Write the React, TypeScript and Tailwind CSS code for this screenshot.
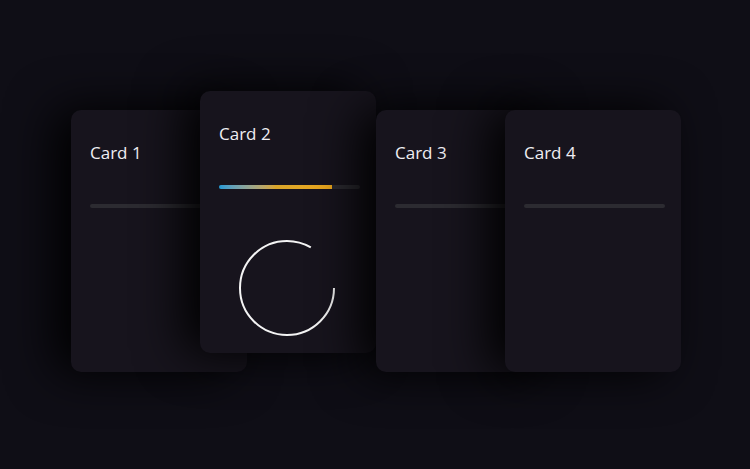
import React from 'react';

interface CardProps {
  title: string;
  className?: string;
  progress?: number;
  showRing?: boolean;
}

const Card: React.FC<CardProps> = ({ title, className = '', progress, showRing }) => {
  const radius = 47;
  const circumference = 2 * Math.PI * radius;
  const arc = (300 / 360) * circumference;

  return (
    <div
      className={`relative w-[176px] h-[262px] shrink-0 rounded-[10px] bg-[#17141d] px-[19px] pt-[30px] shadow-[-16px_0_48px_#000] ${className}`}
    >
      <h2 className="text-[17px] leading-[25px] font-normal text-[#f0eef3]">{title}</h2>

      {/* Progress track */}
      <div className="mt-[39px] h-[4px] w-[141px] rounded-full bg-[#2c2b31]">
        {progress !== undefined && (
          <div
            className="h-full rounded-l-full bg-gradient-to-r from-[#1d9ad6] via-[#d9a52a] to-[#efa91c]"
            style={{ width: `${progress}%` }}
          />
        )}
      </div>

      {/* Ring */}
      {showRing && (
        <div className="mt-[49px] flex justify-center pr-[2px]">
          <svg width="100" height="100" viewBox="0 0 100 100">
            <circle
              cx="50"
              cy="50"
              r={radius}
              fill="none"
              stroke="#f4f4f4"
              strokeWidth="2"
              strokeDasharray={`${arc} ${circumference}`}
            />
          </svg>
        </div>
      )}
    </div>
  );
};

export default function App() {
  return (
    <div
      className="w-[750px] h-[469px] overflow-hidden bg-[#0f0e16]"
      style={{ fontFamily: '"Open Sans", "Noto Sans", sans-serif' }}
    >
      <div className="flex items-start pl-[71px] pt-[91px]">
        <Card title="Card 1" className="mt-[19px]" />
        <Card title="Card 2" className="-ml-[47px]" progress={80} showRing />
        <Card title="Card 3" className="mt-[19px]" />
        <Card title="Card 4" className="-ml-[47px] mt-[19px]" />
      </div>
    </div>
  );
}
